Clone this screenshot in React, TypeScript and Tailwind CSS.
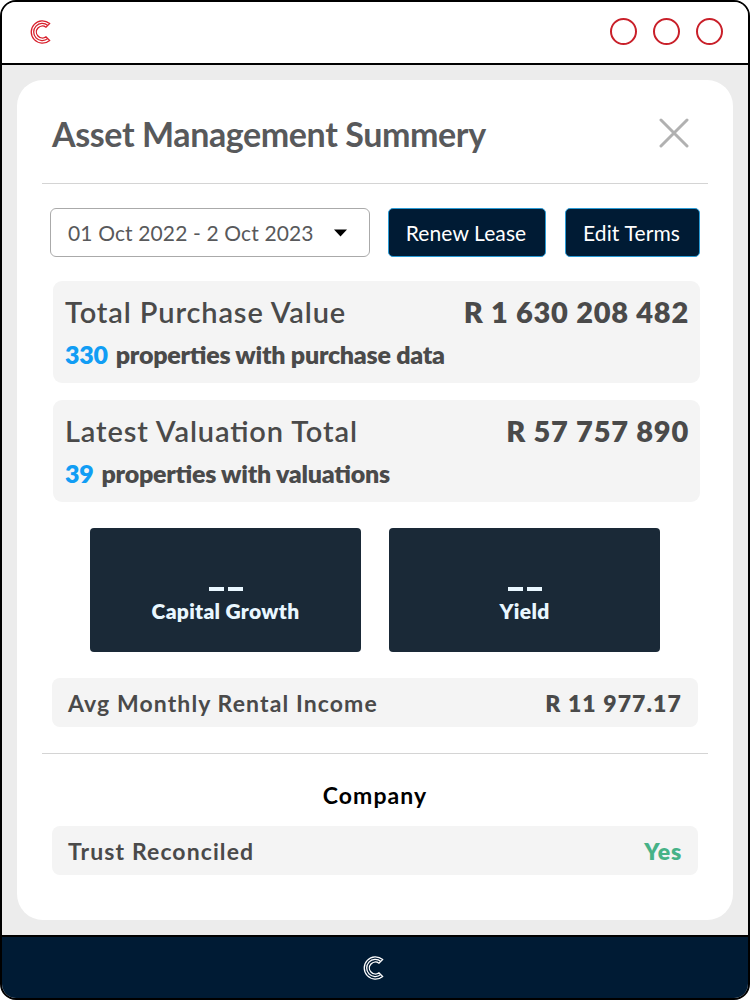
const Logo = ({ color }: { color: string }) => (
  <svg width="22" height="26" viewBox="0 0 22 26" fill="none" stroke={color} strokeWidth="1.3" className="block">
    <path d="M20.6 4.6A11.1 11.1 0 1 0 20.6 21.4L17 17.8A6 6 0 1 1 17 8.2Z" />
    <path d="M18.8 6.4A8.6 8.6 0 1 0 18.8 19.6" />
  </svg>
);

const ValueCard = ({ title, value, count, note }: { title: string; value: string; count: string; note: string }) => (
  <section className="h-[102px] rounded-[9px] bg-[#f4f4f4] pt-[11px] pr-[11px] pl-[12px]">
    <div className="flex h-10 items-center justify-between text-[29px] whitespace-nowrap">
      <span className="font-semibold tracking-[.88px] [font-feature-settings:'liga'_1]">{title}</span>
      <span className="font-extrabold tracking-[.75px]">{value}</span>
    </div>
    <div className="mt-[3px] flex h-10 items-center gap-[8px] text-[25px] font-extrabold tracking-[-0.26px] whitespace-nowrap [font-feature-settings:'liga'_1]">
      <span className="text-[#119df4]">{count}</span>
      <span>{note}</span>
    </div>
  </section>
);

const MetricTile = ({ label }: { label: string }) => (
  <div className="flex h-[124px] w-[271px] flex-col items-center rounded-[4px] bg-[#1a2937] pt-[59px] text-[#e9f7ff]">
    <div className="flex gap-1">
      <span className="h-1 w-[15px] bg-current" />
      <span className="h-1 w-[15px] bg-current" />
    </div>
    <span className="mt-[6px] text-[21px] leading-7 font-extrabold tracking-[.3px]">{label}</span>
  </div>
);

export default function App() {
  return (
    <div className="h-[1000px] w-[750px] bg-white font-['Lato',sans-serif] text-[#4a4a4a]">
      <div className="flex h-full flex-col overflow-hidden rounded-[16px] border-2 border-black bg-[#ececec]">
        <header className="flex h-[63px] shrink-0 items-center justify-between border-b-2 border-black bg-white pr-[25px] pb-[2px] pl-[27px]">
          <Logo color="#d71f2b" />
          <div className="flex gap-4">
            <span className="size-[27px] rounded-full border-2 border-[#c9202a]" />
            <span className="size-[27px] rounded-full border-2 border-[#c9202a]" />
            <span className="size-[27px] rounded-full border-2 border-[#c9202a]" />
          </div>
        </header>
        <main className="mx-[15px] mt-[15px] h-[840px] shrink-0 rounded-[26px] bg-white px-[25px]">
          <div className="flex h-[104px] items-center justify-between border-b-[1.5px] border-[#d4d4d4] px-[10px] pt-[3px]">
            <h1 className="text-[34px] font-bold tracking-[-0.4px] text-[#58595b]">Asset Management Summery</h1>
            <svg width="30" height="30" viewBox="0 0 30 30" stroke="#b1b1b1" strokeWidth="3" strokeLinecap="round" className="mr-[9px]"><path d="M2 2L28 28M28 2L2 28" /></svg>
          </div>
          <div className="mt-6 flex h-[49px] pl-2 text-[21px]">
            <div className="flex w-[320px] items-center rounded-[6px] border-[1.5px] border-[#aaa] pl-[17px] tracking-[.13px] text-[#58595b]">
              <span className="w-[246px] whitespace-nowrap">01 Oct 2022 - 2 Oct 2023</span>
              <svg className="ml-5" width="13" height="8" viewBox="0 0 13 8"><path d="M0 .5H13L6.5 7.5Z" fill="#000" /></svg>
            </div>
            <button className="ml-[18px] w-[158px] rounded-[5px] border border-[#2a9bd5] bg-[#001b34] pr-[8px] pl-[6px] tracking-[.1px] text-white">Renew Lease</button>
            <button className="ml-[19px] w-[135px] rounded-[5px] border border-[#2a9bd5] bg-[#001b34] pr-[8px] pl-[6px] tracking-[.15px] text-white">Edit Terms</button>
          </div>
          <div className="mt-6 mr-2 ml-[11px] flex flex-col gap-[17px]">
            <ValueCard title="Total Purchase Value" value="R 1 630 208 482" count="330" note="properties with purchase data" />
            <ValueCard title="Latest Valuation Total" value="R 57 757 890" count="39" note="properties with valuations" />
          </div>
          <div className="mt-[26px] flex justify-center gap-[28px]">
            <MetricTile label="Capital Growth" />
            <MetricTile label="Yield" />
          </div>
          <div className="mt-[26px] mr-[10px] ml-[10px] flex h-[49px] items-center justify-between rounded-[8px] bg-[#f4f4f4] px-4 pt-px text-[23px] whitespace-nowrap">
            <span className="font-bold tracking-[1.1px]">Avg Monthly Rental Income</span>
            <span className="font-extrabold tracking-[1.1px]">R 11 977.17</span>
          </div>
          <div className="mt-[26px] border-t border-[#d4d4d4]" />
          <h2 className="mt-[25px] text-center text-[23px] leading-8 font-bold tracking-[1.1px] text-black">Company</h2>
          <div className="mt-[15px] mr-[10px] ml-[10px] flex h-[49px] items-center justify-between rounded-[8px] bg-[#f4f4f4] px-4 pt-px text-[23px] whitespace-nowrap">
            <span className="font-bold tracking-[1.1px]">Trust Reconciled</span>
            <span className="font-extrabold tracking-[.8px] text-[#46b287]">Yes</span>
          </div>
        </main>
        <footer className="mt-[15px] flex flex-1 items-center justify-center border-t-2 border-black bg-[#001b34] pr-[5px]"><Logo color="#fff" /></footer>
      </div>
    </div>
  );
}
